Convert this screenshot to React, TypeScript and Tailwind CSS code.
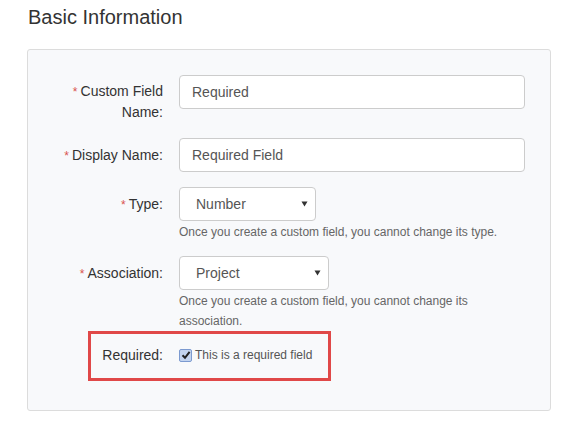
import React from 'react';

function Req() {
  return <span className="text-[#d9534f] text-[12px] mr-[3px]">*</span>;
}

function Caret() {
  return (
    <svg width="7" height="6" viewBox="0 0 7 6" className="shrink-0">
      <path d="M0.5 0.5 L6.5 0.5 L3.5 5.5 Z" fill="#333" />
    </svg>
  );
}

const row = 'grid grid-cols-[135px_1fr] gap-x-[16px] items-start';
const label = 'pl-[25px] text-right text-[14px] leading-[20px]';
const input = 'w-full h-[34px] px-[12px] bg-white border border-[#ccc] rounded-[4px] text-[14px] text-[#555] outline-none';
const select = 'h-[34px] pl-[16px] pr-[7px] flex items-center justify-between bg-white border border-[#ccc] rounded-[4px] text-[14px] text-[#555]';
const help = 'text-[12px] leading-[20px] text-[#666] mt-[1px]';

export default function App() {
  return (
    <div className="w-[571px] h-[428px] bg-white text-[#333] overflow-hidden" style={{ fontFamily: '"Liberation Sans", Arial, sans-serif' }}>
      <h1 className="pl-[28px] pt-[4px] h-[49px] text-[20px] leading-[26px] font-normal">Basic Information</h1>
      <div className="ml-[27px] w-[524px] h-[362px] border border-[#dcdcdc] rounded-[3px] bg-[#f8f9fb] pt-[25px] pr-[25px]">
        <div className={`${row} mb-[16px]`}>
          <label className={`${label} pt-[6px]`}>
            <Req />Custom Field Name:
          </label>
          <input readOnly value="Required" className={input} />
        </div>

        <div className={`${row} mb-[15px]`}>
          <label className={`${label} pt-[7px]`}>
            <Req />Display Name:
          </label>
          <input readOnly value="Required Field" className={input} />
        </div>

        <div className={`${row} mb-[14px]`}>
          <label className={`${label} pt-[7px]`}>
            <Req />Type:
          </label>
          <div>
            <div className={`${select} w-[137px]`}>
              <span>Number</span>
              <Caret />
            </div>
            <p className={help}>Once you create a custom field, you cannot change its type.</p>
          </div>
        </div>

        <div className={row}>
          <label className={`${label} pt-[7px]`}>
            <Req />Association:
          </label>
          <div className="w-[310px]">
            <div className={`${select} w-[150px]`}>
              <span>Project</span>
              <Caret />
            </div>
            <p className={help}>Once you create a custom field, you cannot change its association.</p>
          </div>
        </div>

        <div className="relative grid grid-cols-[135px_1fr] gap-x-[16px] h-[40px] mt-[4px] items-center">
          <div className="absolute left-[60px] top-[-4px] w-[243px] h-[50px] border-[3px] border-[#e04848]" />
          <label className={label}>Required:</label>
          <div className="flex items-center gap-[3px] text-[12px] text-[#555]">
            <span className="w-[13px] h-[13px] border border-[#7c9ad0] bg-[#c3d4ef] rounded-[2px] flex items-center justify-center">
              <svg width="10" height="10" viewBox="0 0 10 10">
                <path d="M1.5 5.2 L4 7.8 L8.6 1.8" fill="none" stroke="#222" strokeWidth="2" />
              </svg>
            </span>
            <span>This is a required field</span>
          </div>
        </div>
      </div>
    </div>
  );
}
